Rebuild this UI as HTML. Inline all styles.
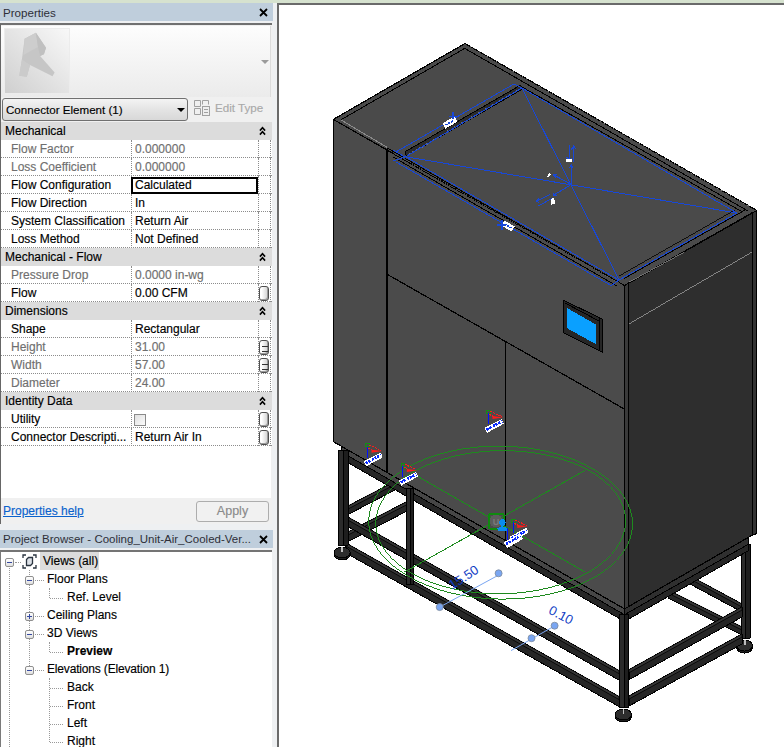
<!DOCTYPE html>
<html><head><meta charset="utf-8">
<style>
*{margin:0;padding:0;box-sizing:border-box}
html,body{width:784px;height:747px;overflow:hidden;background:#eef0f2;font-family:"Liberation Sans",sans-serif;font-size:12px;color:#000;-webkit-text-stroke:0.15px currentColor}
.abs{position:absolute}
#topstrip{position:absolute;left:0;top:0;width:784px;height:3px;background:#d6e2cf}
.title{position:absolute;left:0;width:273px;height:18px;background:#bfcedc;color:#2e2e38;font-size:11.6px;line-height:19px;padding-left:3px;white-space:nowrap;-webkit-text-stroke:0}
.x{position:absolute;right:6px;top:4px;width:9px;height:9px}
#props{position:absolute;left:0;top:23px;width:272px;height:501px;background:#f0f0f0;border-left:1px solid #666;border-top:2px solid #707070}
#preview{position:absolute;left:1px;top:26px;width:270px;height:71px;background:linear-gradient(#fdfdfd,#ebebeb);border-right:1px solid #dcdcdc}
#imgbox{position:absolute;left:4px;top:28px;width:66px;height:66px;background:linear-gradient(225deg,#f8f8f8,#cfcfcf);border:1px solid #ececec}
#ddl{position:absolute;left:2px;top:98px;width:186px;height:23px;border:1px solid #707070;border-radius:3px;background:linear-gradient(#f4f4f4,#e4e4e4 50%,#d8d8d8);}
#ddl span{position:absolute;left:3px;top:4px;font-size:11.6px;white-space:nowrap}
#ddl i{position:absolute;left:174px;top:9px;width:0;height:0;border-left:4px solid transparent;border-right:4px solid transparent;border-top:4px solid #000}
#edittype{position:absolute;left:215px;top:101px;color:#a9a9a9;font-size:11.6px;white-space:nowrap}
.hdr{position:absolute;left:1px;width:271px;height:18px;background:#dcdcdc;line-height:19px;padding-left:4px;font-size:12px}
.chev{position:absolute;left:258px;top:4px;width:8px;height:10px}
.chev:before,.chev:after{content:"";position:absolute;left:1px;width:4px;height:4px;border-left:2px solid #000;border-top:2px solid #000;transform:rotate(45deg)}
.chev:before{top:1px} .chev:after{top:5px}
.row{position:absolute;left:1px;width:271px;height:18px;background:#fff;line-height:17px;border-bottom:1px dotted #8c8c8c;white-space:nowrap}
.row:before{content:"";position:absolute;left:130px;top:0;height:18px;border-left:1px dotted #8c8c8c}
.row:after{content:"";position:absolute;left:257px;top:0;height:18px;border-left:1px dotted #8c8c8c;width:11px;border-right:1px dotted #8c8c8c}
.nm{position:absolute;left:10px;top:1px}
.vl{position:absolute;left:134px;top:1px}
.g{color:#6f6f6f}
.calcbox{position:absolute;left:131px;width:127px;height:17px;border:2px solid #000;border-width:2px 2px 2px 2px}
.sbtn{position:absolute;left:259px;width:10px;height:15px;border:1px solid #4e4e4e;border-radius:3px;background:linear-gradient(90deg,#ffffff 20%,#d0d0d0);box-shadow:inset -1px -1px 0 #9a9a9a}
.sbtn.b2:before{content:"";position:absolute;left:2px;top:5px;width:6px;height:4px;border-top:1px solid #333;border-bottom:1px solid #333}
.chk{position:absolute;left:134px;width:12px;height:12px;border:1px solid #8a8a8a;background:linear-gradient(135deg,#e0e0e0,#fbfbfb)}
#helparea{position:absolute;left:1px;top:498px;width:271px;height:25px;background:#f0f0f0}
#help{position:absolute;left:3px;top:504px;color:#0a62cd;text-decoration:underline;font-size:12px;white-space:nowrap}
#apply{position:absolute;left:196px;top:501px;width:73px;height:21px;border:1px solid #adadad;border-radius:3px;background:#f1f1f1;color:#8a8a8a;text-align:center;line-height:19px;font-size:12.5px}
#tree{position:absolute;left:0;top:550px;width:272px;height:197px;background:#fff;border-left:1px solid #7a7a7a;border-top:2px solid #747474}
.tbox{position:absolute;width:9px;height:9px;border:1px solid #8f8f8f;border-radius:2px;background:linear-gradient(#fff,#dedede)}
.tbox i{position:absolute;left:1px;top:3px;width:5px;height:1px;background:#3549a0}
.tbox b{position:absolute;left:3px;top:1px;width:1px;height:5px;background:#3549a0}
.hdot{position:absolute;height:1px;border-top:1px dotted #999}
.vdot{position:absolute;width:1px;border-left:1px dotted #999}
.ttxt{position:absolute;height:18px;line-height:18px;white-space:nowrap;padding:0 3px}
.ttxt.sel{background:#dcdcdc;width:59px}
.bold{font-weight:bold}
.vicon{position:absolute;width:14px;height:14px}
#viewport{position:absolute;left:277px;top:3px;width:507px;height:744px;background:#fff;border-left:2px solid #6a6a6a;border-top:2px solid #6a6a6a}
svg{position:absolute;left:0;top:0}
</style></head><body>
<div id="topstrip"></div>
<div class="title" style="top:3px">Properties<svg class="x" style="left:259px;top:5px" width="9" height="9" viewBox="0 0 9 9"><path d="M1 1L8 8M8 1L1 8" stroke="#000" stroke-width="1.8"/></svg></div>
<div id="props"></div>
<div id="preview"></div>
<div id="imgbox"><svg width="66" height="66" viewBox="4 28 66 66" style="left:-1px;top:-1px"><polygon points="24.6,38.7 35.9,32.8 46,47.8 43.9,54.3 40.1,55.9 54.6,72.5 52.5,76.2 30,65 26.8,76.7 19.3,75.7 21.9,59.6" fill="#c6c6c6"/><polygon points="24.6,38.7 35.9,32.8 38,47 23.5,55" fill="#cdcdcd"/><polygon points="35.9,32.8 46,47.8 43.9,54.3 40.1,55.9 38,47" fill="#c0c0c0"/><polygon points="21.9,59.6 30,65 26.8,76.7 19.3,75.7" fill="#cbcbcb"/></svg></div>
<svg style="left:261px;top:60px" width="9" height="6"><polygon points="0,0 8,0 4,4" fill="#9a9a9a"/></svg>
<div id="ddl"><span>Connector Element (1)</span><i></i></div>
<svg style="left:193px;top:99px" width="18" height="18" viewBox="0 0 18 18"><g fill="none" stroke="#a0a0a0" stroke-width="1"><path d="M1.5 1.5h6v6h-6z M1.5 9.5h6v6h-6z M9.5 1.5h6v4 M9.5 1.5v4"/><rect x="9.5" y="7.5" width="7" height="9" fill="#eee"/><path d="M11 10.5h4 M11 13.5h4"/></g></svg>
<div id="edittype">Edit Type</div>
<div class="hdr" style="top:122px">Mechanical<svg style="left:258px;top:3.5px" width="7" height="10" viewBox="0 0 7 10"><path d="M0.9,4.6 L3.5,1.8 L6.1,4.6 M0.9,8.6 L3.5,5.8 L6.1,8.6" stroke="#000" stroke-width="1.6" fill="none"/></svg></div>
<div class="row g" style="top:140px"><span class="nm">Flow Factor</span><span class="vl">0.000000</span></div>
<div class="row g" style="top:158px"><span class="nm">Loss Coefficient</span><span class="vl">0.000000</span></div>
<div class="row b" style="top:176px"><span class="nm">Flow Configuration</span><span class="vl">Calculated</span></div>
<div class="calcbox" style="top:177px"></div>
<div class="row b" style="top:194px"><span class="nm">Flow Direction</span><span class="vl">In</span></div>
<div class="row b" style="top:212px"><span class="nm">System Classification</span><span class="vl">Return Air</span></div>
<div class="row b" style="top:230px"><span class="nm">Loss Method</span><span class="vl">Not Defined</span></div>
<div class="hdr" style="top:248px">Mechanical - Flow<svg style="left:258px;top:3.5px" width="7" height="10" viewBox="0 0 7 10"><path d="M0.9,4.6 L3.5,1.8 L6.1,4.6 M0.9,8.6 L3.5,5.8 L6.1,8.6" stroke="#000" stroke-width="1.6" fill="none"/></svg></div>
<div class="row g" style="top:266px"><span class="nm">Pressure Drop</span><span class="vl">0.0000 in-wg</span></div>
<div class="row b" style="top:284px"><span class="nm">Flow</span><span class="vl">0.00 CFM</span></div>
<div class="sbtn" style="top:286px"></div>
<div class="hdr" style="top:302px">Dimensions<svg style="left:258px;top:3.5px" width="7" height="10" viewBox="0 0 7 10"><path d="M0.9,4.6 L3.5,1.8 L6.1,4.6 M0.9,8.6 L3.5,5.8 L6.1,8.6" stroke="#000" stroke-width="1.6" fill="none"/></svg></div>
<div class="row b" style="top:320px"><span class="nm">Shape</span><span class="vl">Rectangular</span></div>
<div class="row g" style="top:338px"><span class="nm">Height</span><span class="vl">31.00</span></div>
<div class="sbtn b2" style="top:340px"></div>
<div class="row g" style="top:356px"><span class="nm">Width</span><span class="vl">57.00</span></div>
<div class="sbtn b2" style="top:358px"></div>
<div class="row g" style="top:374px"><span class="nm">Diameter</span><span class="vl">24.00</span></div>
<div class="hdr" style="top:392px">Identity Data<svg style="left:258px;top:3.5px" width="7" height="10" viewBox="0 0 7 10"><path d="M0.9,4.6 L3.5,1.8 L6.1,4.6 M0.9,8.6 L3.5,5.8 L6.1,8.6" stroke="#000" stroke-width="1.6" fill="none"/></svg></div>
<div class="row b" style="top:410px"><span class="nm">Utility</span><span class="vl"></span></div>
<div class="chk" style="top:414px"></div>
<div class="sbtn" style="top:412px"></div>
<div class="row b" style="top:428px"><span class="nm">Connector Descripti...</span><span class="vl">Return Air In</span></div>
<div class="sbtn" style="top:430px"></div>
<div class="abs" style="left:1px;top:446px;width:270px;height:52px;background:#fff"></div><div id="helparea"></div>
<div id="help">Properties help</div>
<div id="apply">Apply</div>
<div class="title" style="top:530px;font-size:11.5px">Project Browser - Cooling_Unit-Air_Cooled-Ver...<svg class="x" style="left:259px;top:5px" width="9" height="9" viewBox="0 0 9 9"><path d="M1 1L8 8M8 1L1 8" stroke="#000" stroke-width="1.8"/></svg></div>
<div id="tree"></div>
<div class="vdot" style="left:9px;top:568px;height:179px"></div>
<div class="vdot" style="left:29px;top:570px;height:5px"></div>
<div class="vdot" style="left:29px;top:585px;height:81px"></div>
<div class="vdot" style="left:49px;top:588px;height:10px"></div>
<div class="vdot" style="left:49px;top:642px;height:10px"></div>
<div class="vdot" style="left:49px;top:678px;height:64px"></div>
<div class="tbox" style="left:5px;top:558px"><i></i></div>
<div class="hdot" style="left:15px;top:562px;width:6px"></div>
<div class="vicon" style="left:22px;top:554px"></div>
<div class="ttxt sel" style="left:40px;top:552px">Views (all)</div>
<div class="tbox" style="left:25px;top:576px"><i></i></div>
<div class="hdot" style="left:35px;top:580px;width:9px"></div>
<div class="ttxt" style="left:44px;top:570px">Floor Plans</div>
<div class="hdot" style="left:50px;top:598px;width:13px"></div>
<div class="ttxt" style="left:64px;top:588px">Ref. Level</div>
<div class="tbox" style="left:25px;top:612px"><i></i><b></b></div>
<div class="hdot" style="left:35px;top:616px;width:9px"></div>
<div class="ttxt" style="left:44px;top:606px">Ceiling Plans</div>
<div class="tbox" style="left:25px;top:630px"><i></i></div>
<div class="hdot" style="left:35px;top:634px;width:9px"></div>
<div class="ttxt" style="left:44px;top:624px">3D Views</div>
<div class="hdot" style="left:50px;top:652px;width:13px"></div>
<div class="ttxt bold" style="left:64px;top:642px">Preview</div>
<div class="tbox" style="left:25px;top:666px"><i></i></div>
<div class="hdot" style="left:35px;top:670px;width:9px"></div>
<div class="ttxt" style="left:44px;top:660px;letter-spacing:-0.17px">Elevations (Elevation 1)</div>
<div class="hdot" style="left:50px;top:688px;width:13px"></div>
<div class="ttxt" style="left:64px;top:678px">Back</div>
<div class="hdot" style="left:50px;top:706px;width:13px"></div>
<div class="ttxt" style="left:64px;top:696px">Front</div>
<div class="hdot" style="left:50px;top:724px;width:13px"></div>
<div class="ttxt" style="left:64px;top:714px">Left</div>
<div class="hdot" style="left:50px;top:742px;width:13px"></div>
<div class="ttxt" style="left:64px;top:732px">Right</div>
<svg style="left:22px;top:554px" width="15" height="15" viewBox="0 0 15 15"><g fill="none" stroke="#2a3440" stroke-width="1.3"><path d="M1 4V1h3 M11 1h3v3 M14 11v3h-3 M4 14H1v-3"/><path d="M4.5 5.5l2-2h4v6l-2 2h-4z" fill="#dde2e8"/></g></svg>
<div id="viewport"></div>
<svg width="784" height="747" style="left:0;top:0" shape-rendering="crispEdges"><polygon points="668.0,590.0 742.0,627.0 742.0,635.0 668.0,598.0" fill="#262626" stroke="#000" stroke-width="1" stroke-linejoin="round" /><polygon points="668.0,590.0 742.0,627.0 742.0,630.0 668.0,593.0" fill="#353535" stroke="#000" stroke-width="0.8" stroke-linejoin="round" /><polygon points="690.0,576.0 742.0,604.0 742.0,612.0 690.0,584.0" fill="#262626" stroke="#000" stroke-width="1" stroke-linejoin="round" /><polygon points="690.0,576.0 742.0,604.0 742.0,607.0 690.0,579.0" fill="#353535" stroke="#000" stroke-width="0.8" stroke-linejoin="round" /><polygon points="741.0,544.0 745.8,544.0 745.8,638.0 741.0,638.0" fill="#2b2b2b" stroke="#000" stroke-width="1" stroke-linejoin="round" /><polygon points="745.8,544.0 750.0,544.0 750.0,638.0 745.8,638.0" fill="#1e1e1e" stroke="#000" stroke-width="1" stroke-linejoin="round" /><path d="M736.5,645.5 L736.5,647.5 A8,5.5 0 0 0 752.5,647.5 L752.5,645.5 Z" fill="#1e1e1e" stroke="#000" stroke-width="1"/><ellipse cx="744.5" cy="645.5" rx="8" ry="5.5" fill="#2d2d2d" stroke="#000" stroke-width="1"/><rect x="743.7" y="640.0" width="1.8" height="5" fill="#bdbdbd"/><polygon points="629.0,669.7 742.0,607.0 742.0,617.0 629.0,679.7" fill="#262626" stroke="#000" stroke-width="1" stroke-linejoin="round" /><polygon points="629.0,669.7 742.0,607.0 742.0,610.0 629.0,672.7" fill="#353535" stroke="#000" stroke-width="0.8" stroke-linejoin="round" /><polygon points="629.0,696.0 742.0,634.0 742.0,644.0 629.0,706.0" fill="#262626" stroke="#000" stroke-width="1" stroke-linejoin="round" /><polygon points="629.0,696.0 742.0,634.0 742.0,637.0 629.0,699.0" fill="#353535" stroke="#000" stroke-width="0.8" stroke-linejoin="round" /><polygon points="348.0,506.0 412.0,472.5 412.0,481.0 348.0,514.5" fill="#262626" stroke="#000" stroke-width="1" stroke-linejoin="round" /><polygon points="348.0,506.0 412.0,472.5 412.0,475.5 348.0,509.0" fill="#353535" stroke="#000" stroke-width="0.8" stroke-linejoin="round" /><polygon points="348.0,532.0 412.0,499.0 412.0,508.5 348.0,541.5" fill="#262626" stroke="#000" stroke-width="1" stroke-linejoin="round" /><polygon points="348.0,532.0 412.0,499.0 412.0,502.0 348.0,535.0" fill="#353535" stroke="#000" stroke-width="0.8" stroke-linejoin="round" /><polygon points="624.5,614.7 748.7,544.0 748.7,550.5 624.5,621.5" fill="#262626" stroke="#000" stroke-width="1" stroke-linejoin="round" /><polygon points="341.0,451.8 624.5,614.7 624.5,621.5 341.0,458.6" fill="#262626" stroke="#000" stroke-width="1" stroke-linejoin="round" /><polygon points="341.0,446.0 624.5,608.9 624.5,614.7 341.0,451.8" fill="#464646" stroke="#000" stroke-width="1" stroke-linejoin="round" /><polygon points="624.5,608.9 752.5,535.0 748.7,537.2 748.7,544.0 624.5,614.7" fill="#2f2f2f" stroke="#000" stroke-width="1" stroke-linejoin="round" /><polygon points="333.3,119.4 624.5,285.5 624.5,608.9 333.3,441.6" fill="#4b4b4b" stroke="#000" stroke-width="1.2" stroke-linejoin="round" /><polygon points="624.5,285.5 756.8,210.5 756.8,533.4 752.5,535.0 624.5,608.9" fill="#2e2e2e" stroke="#000" stroke-width="1.2" stroke-linejoin="round" /><polygon points="333.3,119.4 465.0,43.5 756.8,210.5 624.5,285.5" fill="#4a4a4a" stroke="#000" stroke-width="1.2" stroke-linejoin="round" /><polygon points="752.5,213.0 756.8,210.5 756.8,533.4 752.5,535.0" fill="#333333" stroke="#000" stroke-width="1" stroke-linejoin="round" /><line x1="341.0" y1="119.8" x2="465.0" y2="48.2" stroke="#000" stroke-width="1" /><line x1="465.0" y1="48.5" x2="748.0" y2="211.0" stroke="#000" stroke-width="1" /><line x1="522.5" y1="87.3" x2="743.0" y2="212.2" stroke="#000" stroke-width="1" /><line x1="470.0" y1="46.0" x2="752.0" y2="208.0" stroke="#7a7a7a" stroke-width="1" stroke-dasharray="1 4"/><line x1="341.0" y1="120.0" x2="387.4" y2="147.5" stroke="#8a8a8a" stroke-width="1" /><line x1="628.5" y1="283.0" x2="752.5" y2="212.5" stroke="#000" stroke-width="1" /><line x1="624.0" y1="278.5" x2="745.0" y2="210.0" stroke="#000" stroke-width="1" /><line x1="619.0" y1="276.0" x2="735.0" y2="210.0" stroke="#000" stroke-width="0.8" /><polygon points="624.5,285.5 628.5,283.3 628.5,606.7 624.5,608.9" fill="#3a3a3a" stroke="#000" stroke-width="1" stroke-linejoin="round" /><line x1="628.8" y1="324.0" x2="751.5" y2="252.4" stroke="#9a9a9a" stroke-width="0.8" /><line x1="628.8" y1="282.3" x2="684.0" y2="252.4" stroke="#8a8a8a" stroke-width="0.8" /><line x1="387.2" y1="148.5" x2="387.2" y2="472.5" stroke="#000" stroke-width="2" /><line x1="387.5" y1="274.5" x2="624.3" y2="409.0" stroke="#000" stroke-width="1.2" /><line x1="505.3" y1="341.5" x2="505.3" y2="540.0" stroke="#000" stroke-width="1.2" /><polygon points="405.0,151.8 520.5,85.2 522.5,89.0 406.5,156.0" fill="#2c2c2c" stroke="#000" stroke-width="1" stroke-linejoin="round" /><line x1="409.0" y1="153.5" x2="518.0" y2="90.0" stroke="#707070" stroke-width="1" stroke-dasharray="1 3"/><line x1="409.0" y1="155.0" x2="519.0" y2="90.0" stroke="#8a8a8a" stroke-width="0.6" stroke-dasharray="1 2"/><line x1="387.4" y1="148.0" x2="624.5" y2="285.5" stroke="#000" stroke-width="1" /><line x1="393.0" y1="157.0" x2="617.0" y2="286.0" stroke="#000" stroke-width="1" /><line x1="395.0" y1="154.0" x2="619.0" y2="283.0" stroke="#6a6a6a" stroke-width="0.7" stroke-dasharray="1 1.5"/><polygon points="563.4,300.3 602.3,319.0 602.3,352.3 563.4,332.6" fill="#262626" stroke="#000" stroke-width="1" stroke-linejoin="round" /><line x1="599.0" y1="318.0" x2="599.0" y2="350.5" stroke="#000" stroke-width="1" /><line x1="565.0" y1="303.0" x2="599.0" y2="321.0" stroke="#000" stroke-width="1" /><polygon points="566.7,307.8 596.2,324.7 596.2,344.4 566.7,328.0" fill="#0aa0ff" stroke="none" stroke-width="0" stroke-linejoin="round" /><polygon points="345.0,515.4 619.0,670.6 619.0,680.1 345.0,524.9" fill="#262626" stroke="#000" stroke-width="1" stroke-linejoin="round" /><polygon points="345.0,515.4 619.0,670.6 619.0,673.6 345.0,518.4" fill="#353535" stroke="#000" stroke-width="0.8" stroke-linejoin="round" /><polygon points="345.0,542.5 619.0,696.5 619.0,706.5 345.0,552.5" fill="#262626" stroke="#000" stroke-width="1" stroke-linejoin="round" /><polygon points="345.0,542.5 619.0,696.5 619.0,699.5 345.0,545.5" fill="#353535" stroke="#000" stroke-width="0.8" stroke-linejoin="round" /><polygon points="406.3,488.0 410.0,488.0 410.0,584.0 406.3,584.0" fill="#2b2b2b" stroke="#000" stroke-width="1" stroke-linejoin="round" /><polygon points="410.0,488.0 413.8,488.0 413.8,584.0 410.0,584.0" fill="#1e1e1e" stroke="#000" stroke-width="1" stroke-linejoin="round" /><polygon points="338.0,450.0 343.4,450.0 343.4,545.4 338.0,545.4" fill="#2b2b2b" stroke="#000" stroke-width="1" stroke-linejoin="round" /><polygon points="343.4,450.0 348.0,450.0 348.0,545.4 343.4,545.4" fill="#1e1e1e" stroke="#000" stroke-width="1" stroke-linejoin="round" /><path d="M334.2,552.5 L334.2,554.5 A8,5.5 0 0 0 350.2,554.5 L350.2,552.5 Z" fill="#1e1e1e" stroke="#000" stroke-width="1"/><ellipse cx="342.2" cy="552.5" rx="8" ry="5.5" fill="#2d2d2d" stroke="#000" stroke-width="1"/><rect x="341.4" y="547.0" width="1.8" height="5" fill="#bdbdbd"/><polygon points="619.0,614.5 624.8,614.5 624.8,707.0 619.0,707.0" fill="#2b2b2b" stroke="#000" stroke-width="1" stroke-linejoin="round" /><polygon points="624.8,614.5 628.6,614.5 628.6,707.0 624.8,707.0" fill="#1e1e1e" stroke="#000" stroke-width="1" stroke-linejoin="round" /><path d="M615.3,714.5 L615.3,716.5 A8,5.5 0 0 0 631.3,716.5 L631.3,714.5 Z" fill="#1e1e1e" stroke="#000" stroke-width="1"/><ellipse cx="623.3" cy="714.5" rx="8" ry="5.5" fill="#2d2d2d" stroke="#000" stroke-width="1"/><rect x="622.5" y="709.0" width="1.8" height="5" fill="#bdbdbd"/><polygon points="405.5,156.7 522.0,88.0 737.0,213.0 619.0,280.0" fill="none" stroke="#1848d8" stroke-width="1" stroke-linejoin="round" /><line x1="405.5" y1="156.7" x2="737.0" y2="213.0" stroke="#1848d8" stroke-width="1" /><line x1="522.0" y1="88.0" x2="619.0" y2="280.0" stroke="#1848d8" stroke-width="1" /><line x1="396.6" y1="151.6" x2="514.0" y2="84.0" stroke="#1848d8" stroke-width="1" /><line x1="396.0" y1="162.0" x2="612.0" y2="286.0" stroke="#1848d8" stroke-width="1" /><line x1="393.0" y1="161.0" x2="405.0" y2="157.0" stroke="#1848d8" stroke-width="1" /><line x1="611.0" y1="286.0" x2="619.0" y2="280.0" stroke="#1848d8" stroke-width="1" /><line x1="393.0" y1="150.0" x2="405.0" y2="157.0" stroke="#1848d8" stroke-width="1" /><line x1="514.0" y1="84.0" x2="522.0" y2="88.0" stroke="#1848d8" stroke-width="1" /><g transform="translate(450,122.5) rotate(-30)"><rect x="-7" y="-3" width="14" height="6" fill="#fff"/><path d="M-5,0h2m1,0h2m1,0h3" stroke="#1848d8" stroke-width="1.6"/></g><line x1="453.0" y1="112.0" x2="453.0" y2="119.0" stroke="#1848d8" stroke-width="1.6" /><line x1="449.0" y1="116.5" x2="458.0" y2="116.5" stroke="#1848d8" stroke-width="1.6" /><g transform="translate(508,226) rotate(30)"><rect x="-6" y="-3" width="12" height="6" fill="#fff"/><path d="M-4,0h2m1,0h2m1,0h2" stroke="#1848d8" stroke-width="1.6"/></g><line x1="502.0" y1="220.0" x2="502.0" y2="230.0" stroke="#1848d8" stroke-width="1.6" /><line x1="497.0" y1="225.0" x2="506.0" y2="225.0" stroke="#1848d8" stroke-width="1.6" /><line x1="571.2" y1="184.5" x2="571.2" y2="164.0" stroke="#1848d8" stroke-width="1" /><path d="M569.3,168 L571.2,165 L573.1,168" stroke="#1848d8" fill="none" stroke-width="1"/><line x1="569.5" y1="145.0" x2="569.5" y2="160.0" stroke="#1848d8" stroke-width="1" /><line x1="573.6" y1="146.0" x2="573.6" y2="162.0" stroke="#1848d8" stroke-width="1" /><path d="M571.4,149.5 L573.6,146 L576.4,149.5" stroke="#1848d8" fill="none" stroke-width="1"/><path d="M566.5,157 L569.5,160 L572,158" stroke="#1848d8" fill="none" stroke-width="1"/><rect x="566" y="159" width="6" height="3" fill="#fff"/><line x1="571.2" y1="184.5" x2="553.6" y2="174.8" stroke="#1848d8" stroke-width="1" /><path d="M557.5,174.5 L553.6,174.8 L556,178" stroke="#1848d8" fill="none" stroke-width="1"/><path d="M547,177.5 L549,172.5 L551,175 Z" fill="#fff"/><line x1="571.2" y1="184.5" x2="553.0" y2="195.5" stroke="#1848d8" stroke-width="1" /><path d="M553,192.5 L553,195.5 L556.5,195.5" stroke="#1848d8" fill="none" stroke-width="1"/><line x1="536.6" y1="201.0" x2="550.0" y2="194.4" stroke="#1848d8" stroke-width="1" /><line x1="538.4" y1="206.0" x2="551.6" y2="198.6" stroke="#1848d8" stroke-width="1" /><path d="M539,198.5 L536.6,201 L539.5,203.5" stroke="#1848d8" fill="none" stroke-width="1"/><path d="M550.5,199 L554,198 L555.5,203.5 L551.5,204.5 Z" fill="#fff"/><ellipse cx="500.6" cy="522.6" rx="132" ry="76.5" fill="none" stroke="#1e8a1e" stroke-width="1" transform="rotate(0.9 500.6 522.6)"/><ellipse cx="500.7" cy="522.2" rx="125" ry="71.6" fill="none" stroke="#1e8a1e" stroke-width="1" transform="rotate(-0.9 500.7 522.2)"/><line x1="413.6" y1="474.0" x2="585.0" y2="572.0" stroke="#1e8a1e" stroke-width="1" /><line x1="404.6" y1="572.0" x2="585.0" y2="470.4" stroke="#1e8a1e" stroke-width="1" /><circle cx="496" cy="521" r="6.5" fill="#5c5c5c"/><rect x="488.8" y="513.8" width="15" height="15" rx="2" fill="none" stroke="#0f8a0f" stroke-width="1.6"/><text x="496" y="524.5" text-anchor="middle" font-family="Liberation Sans" font-size="9" font-weight="bold" fill="#7a7a7a">U</text><circle cx="502.3" cy="522.5" r="3.3" fill="#0a8cf0"/><path d="M497.5,531 L497.5,528.5 Q502.3,524 507,528.5 L507,531 Z" fill="#0a8cf0"/><rect x="365.7" y="443.9" width="3.6" height="3" fill="none" stroke="#149014" stroke-width="1"/><line x1="367.5" y1="447.0" x2="367.5" y2="457.6" stroke="#0010ff" stroke-width="1.3" /><path d="M369.5,444.9 L381.0,450.4 M368.5,447.9 L374.5,451.4" stroke="#ff1a1a" stroke-width="1.2" fill="none" stroke-dasharray="2 1"/><polygon points="371.5,449.7 382.0,451.0 371.5,452.7" fill="#ff1a1a" shape-rendering="geometricPrecision"/><polygon points="363.5,461.4 380.9,452.5 382.7,457.4 366.2,466.4" fill="#ffffff" stroke="none" stroke-width="0" stroke-linejoin="round" /><path d="M365.5,463.2 L381.0,455.0" stroke="#0a2cff" stroke-width="2.6" stroke-dasharray="2.4 0.7 2.4 1.8 2.2 0.7 2.2 0.7 2.2 1.8 2.4"/><rect x="401.0" y="463.1" width="3.6" height="3" fill="none" stroke="#149014" stroke-width="1"/><line x1="402.8" y1="466.2" x2="402.8" y2="476.8" stroke="#0010ff" stroke-width="1.3" /><path d="M404.8,464.1 L416.3,469.6 M403.8,467.1 L409.8,470.6" stroke="#ff1a1a" stroke-width="1.2" fill="none" stroke-dasharray="2 1"/><polygon points="406.8,468.90000000000003 417.3,470.20000000000005 406.8,471.90000000000003" fill="#ff1a1a" shape-rendering="geometricPrecision"/><polygon points="398.8,480.6 416.2,471.7 418.0,476.6 401.5,485.6" fill="#ffffff" stroke="none" stroke-width="0" stroke-linejoin="round" /><path d="M400.8,482.40000000000003 L416.3,474.20000000000005" stroke="#0a2cff" stroke-width="2.6" stroke-dasharray="2.4 0.7 2.4 1.8 2.2 0.7 2.2 0.7 2.2 1.8 2.4"/><rect x="486.7" y="410.3" width="3.6" height="3" fill="none" stroke="#149014" stroke-width="1"/><line x1="488.5" y1="413.4" x2="488.5" y2="424.0" stroke="#0010ff" stroke-width="1.3" /><path d="M490.5,411.3 L502.0,416.8 M489.5,414.3 L495.5,417.8" stroke="#ff1a1a" stroke-width="1.2" fill="none" stroke-dasharray="2 1"/><polygon points="492.5,416.1 503.0,417.40000000000003 492.5,419.1" fill="#ff1a1a" shape-rendering="geometricPrecision"/><polygon points="484.5,427.8 501.9,418.9 503.7,423.8 487.2,432.8" fill="#ffffff" stroke="none" stroke-width="0" stroke-linejoin="round" /><path d="M486.5,429.6 L502.0,421.40000000000003" stroke="#0a2cff" stroke-width="2.6" stroke-dasharray="2.4 0.7 2.4 1.8 2.2 0.7 2.2 0.7 2.2 1.8 2.4"/><rect x="511.49999999999994" y="519.2" width="3.6" height="3" fill="none" stroke="#149014" stroke-width="1"/><line x1="513.3" y1="522.3" x2="513.3" y2="532.9" stroke="#0010ff" stroke-width="1.3" /><path d="M515.3,520.2 L526.8,525.7 M514.3,523.2 L520.3,526.7" stroke="#ff1a1a" stroke-width="1.2" fill="none" stroke-dasharray="2 1"/><polygon points="517.3,525.0 527.8,526.3000000000001 517.3,528.0" fill="#ff1a1a" shape-rendering="geometricPrecision"/><polygon points="509.3,536.7 526.7,527.8 528.5,532.7 512.0,541.7" fill="#ffffff" stroke="none" stroke-width="0" stroke-linejoin="round" /><path d="M511.29999999999995,538.5 L526.8,530.3000000000001" stroke="#0a2cff" stroke-width="2.6" stroke-dasharray="2.4 0.7 2.4 1.8 2.2 0.7 2.2 0.7 2.2 1.8 2.4"/><polygon points="503.5,542.6 519.8,533.4 523.3,538.8 507.4,548.0" fill="#ffffff" stroke="none" stroke-width="0" stroke-linejoin="round" /><path d="M506,544 L520.5,536" stroke="#0a2cff" stroke-width="2.4" stroke-dasharray="2.2 0.8 2.2 1.6 2 0.8 2 0.8 2 1.6 2.2"/><line x1="507.2" y1="528.0" x2="507.2" y2="540.0" stroke="#0010ff" stroke-width="1.3" /><line x1="439.7" y1="607.1" x2="500.0" y2="574.3" stroke="#7aa6f2" stroke-width="1" shape-rendering="geometricPrecision"/><circle cx="439.7" cy="607.1" r="3.5" fill="#7aa6f2" stroke="#7e8a9a" stroke-width="0.8" shape-rendering="geometricPrecision"/><circle cx="498.6" cy="573.3" r="3.5" fill="#7aa6f2" stroke="#7e8a9a" stroke-width="0.8" shape-rendering="geometricPrecision"/><text x="0" y="0" transform="translate(466,581) rotate(-33)" text-anchor="middle" font-family="Liberation Sans" font-size="13" fill="#0f3cc4">15.50</text><line x1="511.0" y1="650.6" x2="555.0" y2="625.7" stroke="#7aa6f2" stroke-width="1" shape-rendering="geometricPrecision"/><circle cx="531.5" cy="638.2" r="3.5" fill="#7aa6f2" stroke="#7e8a9a" stroke-width="0.8" shape-rendering="geometricPrecision"/><circle cx="554.6" cy="625.7" r="3.5" fill="#7aa6f2" stroke="#7e8a9a" stroke-width="0.8" shape-rendering="geometricPrecision"/><text x="0" y="0" transform="translate(559,619) rotate(28)" text-anchor="middle" font-family="Liberation Sans" font-size="13" fill="#0f3cc4">0.10</text></svg>
</body></html>
